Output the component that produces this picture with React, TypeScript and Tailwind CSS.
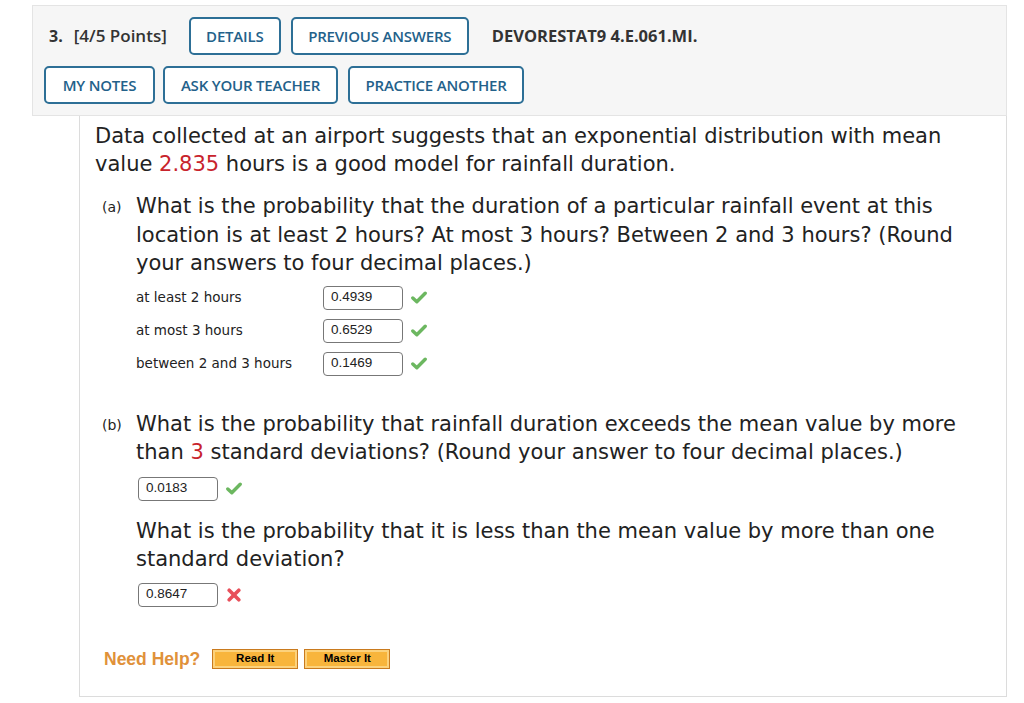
import React from "react";

const HeaderButton = ({ label, className }: { label: string; className: string }) => (
  <button
    className={`h-[38px] border-2 border-[#2d6f96] rounded-[5px] bg-white text-[#23618a] text-[15px] font-semibold tracking-[-0.2px] ${className}`}
  >
    {label}
  </button>
);

const Check = () => (
  <svg width="16" height="13" viewBox="0 0 16 13" className="ml-[8px]">
    <path d="M1.8 7 L5.8 10.8 L14.2 2.2" fill="none" stroke="#6cb760" strokeWidth="3.4" strokeLinejoin="round" strokeLinecap="round" />
  </svg>
);

const Cross = () => (
  <svg width="14" height="14" viewBox="0 0 14 14" className="ml-[9px]">
    <path d="M2.2 2.2 L11.8 11.8 M11.8 2.2 L2.2 11.8" stroke="#e8505b" strokeWidth="3.6" strokeLinecap="round" />
  </svg>
);

const AnswerBox = ({ value }: { value: string }) => (
  <div className="w-[80px] h-[24px] border border-[#777] rounded-[4px] bg-white pl-[7px] flex items-center text-[13.5px] text-[#222] font-['Liberation_Sans',Arial,sans-serif]">
    {value}
  </div>
);

const rows = [
  { label: "at least 2 hours", value: "0.4939" },
  { label: "at most 3 hours", value: "0.6529" },
  { label: "between 2 and 3 hours", value: "0.1469" },
];

export default function App() {
  return (
    <div className="w-[1024px] h-[703px] bg-white overflow-hidden pt-[5px]">
      {/* header */}
      <div className="ml-[32px] w-[975px] h-[111px] bg-[#f6f6f6] border border-[#e4e4e4] font-['Open_Sans',sans-serif] pl-[11px] pt-[11px]">
        <div className="flex items-center">
          <span className="ml-[5px] text-[16px] font-bold text-[#333]">3.</span>
          <span className="ml-[11px] text-[17px] font-semibold text-[#333]">[4/5 Points]</span>
          <HeaderButton label="DETAILS" className="ml-[22px] w-[92px]" />
          <HeaderButton label="PREVIOUS ANSWERS" className="ml-[10px] w-[178px]" />
          <span className="ml-[23px] text-[16.5px] font-bold text-[#333]">DEVORESTAT9 4.E.061.MI.</span>
        </div>
        <div className="flex items-center mt-[11px]">
          <HeaderButton label="MY NOTES" className="w-[111px]" />
          <HeaderButton label="ASK YOUR TEACHER" className="ml-[8px] w-[175px]" />
          <HeaderButton label="PRACTICE ANOTHER" className="ml-[10px] w-[176px]" />
        </div>
      </div>

      {/* body */}
      <div className="ml-[79px] w-[928px] h-[581px] border-l border-r border-b border-[#dcdcdc] font-['DejaVu_Sans',Verdana,sans-serif] text-[#222]">
        <p className="ml-[15px] w-[870px] pt-[6px] text-[21px] leading-[28px]">
          Data collected at an airport suggests that an exponential distribution with mean value{" "}
          <span className="text-[#c8232c]">2.835</span> hours is a good model for rainfall duration.
        </p>

        <div className="flex mt-[14px]">
          <span className="pl-[22px] w-[56px] text-[14px] leading-[28px] pt-[1px]">(a)</span>
          <div className="w-[845px]">
            <p className="text-[21px] leading-[28.5px]">
              What is the probability that the duration of a particular rainfall event at this location is at least 2 hours? At most 3 hours? Between 2 and 3 hours? (Round your answers to four decimal places.)
            </p>
            <div className="mt-[8px] flex flex-col gap-[9px] text-[13.5px]">
              {rows.map((r) => (
                <div key={r.label} className="flex items-center">
                  <span className="w-[187px]">{r.label}</span>
                  <AnswerBox value={r.value} />
                  <Check />
                </div>
              ))}
            </div>
          </div>
        </div>

        <div className="flex mt-[34px]">
          <span className="pl-[22px] w-[56px] text-[14px] leading-[28px] pt-[1px]">(b)</span>
          <div className="w-[845px]">
            <p className="text-[21px] leading-[28.5px]">
              What is the probability that rainfall duration exceeds the mean value by more than{" "}
              <span className="text-[#c8232c]">3</span> standard deviations? (Round your answer to four decimal places.)
            </p>
            <div className="mt-[10px] ml-[2px] flex items-center">
              <AnswerBox value="0.0183" />
              <Check />
            </div>
            <p className="mt-[16px] text-[21px] leading-[28.5px]">
              What is the probability that it is less than the mean value by more than one standard deviation?
            </p>
            <div className="mt-[9px] ml-[2px] flex items-center">
              <AnswerBox value="0.8647" />
              <Cross />
            </div>
          </div>
        </div>

        <div className="flex items-center ml-[24px] mt-[39px] font-['Liberation_Sans',Arial,sans-serif]">
          <span className="text-[17.5px] font-bold text-[#e0913a]">Need Help?</span>
          <button className="ml-[12px] w-[86px] h-[20px] bg-[#f8b53c] border border-[#c97a1e] shadow-[inset_0_0_0_2px_#fcd27c] text-[11.5px] font-bold text-black">
            Read It
          </button>
          <button className="ml-[6px] w-[86px] h-[20px] bg-[#f8b53c] border border-[#c97a1e] shadow-[inset_0_0_0_2px_#fcd27c] text-[11.5px] font-bold text-black">
            Master It
          </button>
        </div>
      </div>
    </div>
  );
}
